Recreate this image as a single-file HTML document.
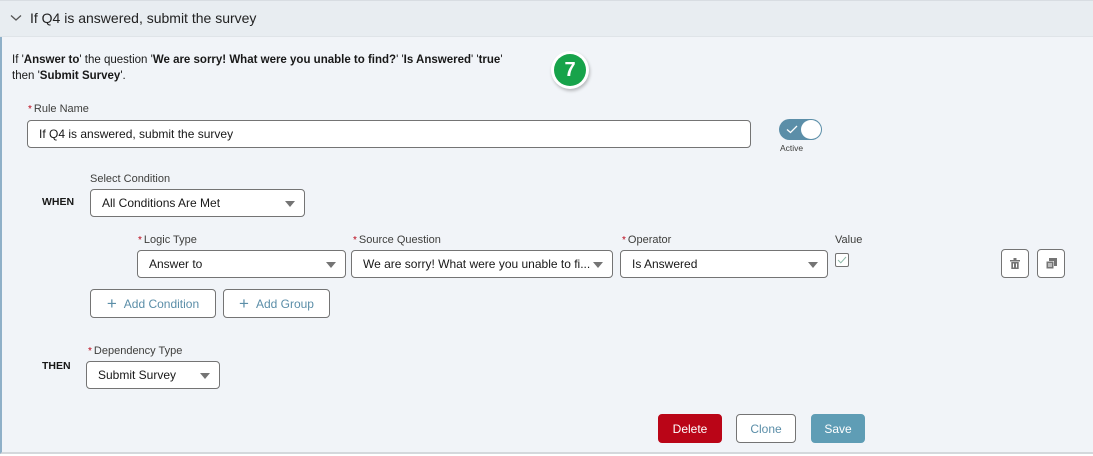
<!DOCTYPE html>
<html><head><meta charset="utf-8"><style>
*{box-sizing:border-box;margin:0;padding:0}
body{width:1093px;height:456px;overflow:hidden;background:#fff;font-family:"Liberation Sans",sans-serif;color:#181818;position:relative}
.panel{position:absolute;left:0;top:0;width:1093px;height:454px;background:#f1f4f8;border-left:2px solid #8fb0c8;border-bottom:2px solid #d4d8dc}
.hdr{position:absolute;left:0;top:0;width:1093px;height:37px;background:#e8edf1;border-top:1px solid #d8dde2;border-bottom:1px solid #dfe4e8}
.a{position:absolute;white-space:nowrap}
.lbl{font-size:11px;color:#3e3e3c}
.req{color:#ba0517;font-size:10px;margin-right:2px}
.box{position:absolute;background:#fff;border:1px solid #747474;border-radius:4px;font-size:12px;padding-left:11px;display:flex;align-items:center}
.arr{position:absolute;right:9px;top:11px;width:0;height:0;border-left:5px solid transparent;border-right:5px solid transparent;border-top:6px solid #747474}
.btn{position:absolute;border:1px solid #747474;border-radius:4px;background:#fff;font-size:12px;display:flex;align-items:center;justify-content:center;color:#5b8ea8}
</style></head><body>
<div class="panel"></div>
<div class="hdr"></div>
<svg class="a" style="left:10px;top:14px" width="12" height="8" viewBox="0 0 12 8"><path d="M1 1.5 L6 6 L11 1.5" fill="none" stroke="#555" stroke-width="1.3"/></svg>
<div class="a" style="left:30px;top:10px;font-size:14px;color:#222">If Q4 is answered, submit the survey</div>
<div class="a" style="left:12px;top:52px;font-size:11.5px;line-height:16px">If '<b>Answer to</b>' the question '<b>We are sorry! What were you unable to find?</b>' '<b>Is Answered</b>' '<b>true</b>'<br>then '<b>Submit Survey</b>'.</div>
<div class="a" style="left:551px;top:51px;width:38px;height:38px;border-radius:50%;background:#fff;box-shadow:1px 2px 3px rgba(0,0,0,.25)"></div>
<div class="a" style="left:554px;top:54px;width:32px;height:32px;border-radius:50%;background:#17a34a;color:#fff;font-weight:bold;font-size:20px;text-align:center;line-height:32px">7</div>
<div class="a lbl" style="left:28px;top:103px"><span class="req">*</span>Rule Name</div>
<div class="box" style="left:27px;top:120px;width:724px;height:28px">If Q4 is answered, submit the survey</div>
<div class="a" style="left:779px;top:119px;width:43px;height:21px;border-radius:11px;background:#5b8ea8"></div>
<div class="a" style="left:801px;top:120px;width:20px;height:19px;border-radius:50%;background:#fff"></div>
<svg class="a" style="left:786px;top:125px" width="12" height="9" viewBox="0 0 12 9"><path d="M1 4.5 L4.5 7.5 L11 1" fill="none" stroke="#fff" stroke-width="1.3"/></svg>
<div class="a" style="left:780px;top:143px;font-size:8.5px;color:#3e3e3c">Active</div>
<div class="a lbl" style="left:90px;top:173px">Select Condition</div>
<div class="a" style="left:42px;top:196px;font-size:10.5px;font-weight:bold">WHEN</div>
<div class="box" style="left:90px;top:189px;width:215px;height:28px">All Conditions Are Met<span class="arr"></span></div>
<div class="a lbl" style="left:138px;top:234px"><span class="req">*</span>Logic Type</div>
<div class="box" style="left:137px;top:250px;width:209px;height:28px">Answer to<span class="arr"></span></div>
<div class="a lbl" style="left:353px;top:234px"><span class="req">*</span>Source Question</div>
<div class="box" style="left:351px;top:250px;width:262px;height:28px">We are sorry! What were you unable to fi...<span class="arr"></span></div>
<div class="a lbl" style="left:622px;top:234px"><span class="req">*</span>Operator</div>
<div class="box" style="left:620px;top:250px;width:208px;height:28px">Is Answered<span class="arr"></span></div>
<div class="a lbl" style="left:835px;top:234px">Value</div>
<div class="a" style="left:835px;top:253px;width:14px;height:14px;border:1px solid #747474;border-radius:2px;background:#fff"></div>
<svg class="a" style="left:837px;top:256px" width="10" height="8" viewBox="0 0 10 8"><path d="M1 4 L3.8 6.8 L9 1" fill="none" stroke="#8cb8a8" stroke-width="1"/></svg>
<div class="btn" style="left:1001px;top:249px;width:28px;height:29px"><svg width="10" height="11" viewBox="0 0 10 11"><rect x="0" y="2" width="10" height="1.5" fill="#747474"/><rect x="3.5" y="0" width="3" height="2" fill="#747474"/><rect x="1.3" y="4" width="7.4" height="7" fill="#747474"/><rect x="3" y="5.5" width="1" height="4" fill="#fff"/><rect x="6" y="5.5" width="1" height="4" fill="#fff"/></svg></div>
<div class="btn" style="left:1037px;top:249px;width:28px;height:29px"><svg width="11" height="11" viewBox="0 0 11 11"><rect x="3" y="0" width="8" height="8" fill="#747474"/><rect x="0" y="3" width="8" height="8" fill="#fff"/><rect x="0.5" y="3.5" width="7" height="7" fill="#747474"/><rect x="2" y="5.5" width="4" height="1" fill="#fff"/><rect x="2" y="7.5" width="4" height="1" fill="#fff"/></svg></div>
<div class="btn" style="left:90px;top:289px;width:126px;height:29px"><span style="font-size:17px;margin-right:7px;font-weight:300">+</span>Add Condition</div>
<div class="btn" style="left:223px;top:289px;width:107px;height:29px"><span style="font-size:17px;margin-right:7px;font-weight:300">+</span>Add Group</div>
<div class="a lbl" style="left:88px;top:345px"><span class="req">*</span>Dependency Type</div>
<div class="a" style="left:42px;top:360px;font-size:10.5px;font-weight:bold">THEN</div>
<div class="box" style="left:86px;top:361px;width:134px;height:28px">Submit Survey<span class="arr"></span></div>
<div class="btn" style="left:658px;top:414px;width:64px;height:29px;background:#ba0517;border-color:#ba0517;color:#fff">Delete</div>
<div class="btn" style="left:736px;top:414px;width:60px;height:29px">Clone</div>
<div class="btn" style="left:811px;top:414px;width:54px;height:29px;background:#5f9db5;border-color:#5f9db5;color:#fff">Save</div>
</body></html>
